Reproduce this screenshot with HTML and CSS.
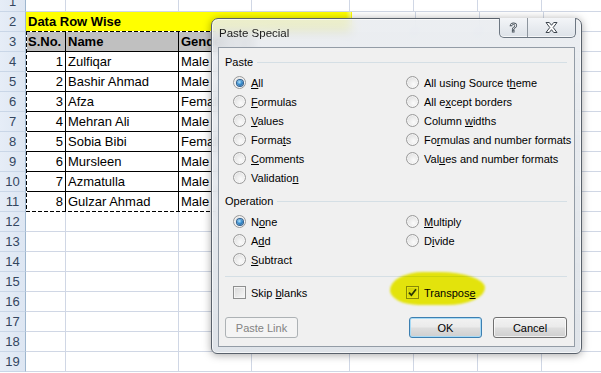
FILE: index.html
```html
<!DOCTYPE html>
<html>
<head>
<meta charset="utf-8">
<link rel="stylesheet" href="styles.css">
</head>
<body>
<div class="sheet">
  <div class="row"><div class="rh">1</div><div class="c ca"></div><div class="c cb"></div><div class="c cc"></div><div class="c cd"></div><div class="c ce"></div><div class="c ce"></div><div class="c ce"></div><div class="c ce"></div></div>
  <div class="row"><div class="rh">2</div><div class="c span4 title-cell">Data Row Wise</div><div class="c ce"></div><div class="c ce"></div><div class="c ce"></div><div class="c ce"></div></div>
  <div class="row"><div class="rh">3</div><div class="c ca t hd">S.No.</div><div class="c cb t hd">Name</div><div class="c cc t hd">Gender</div><div class="c cd"></div><div class="c ce"></div><div class="c ce"></div><div class="c ce"></div><div class="c ce"></div></div>
  <div class="row"><div class="rh">4</div><div class="c ca t num">1</div><div class="c cb t">Zulfiqar</div><div class="c cc t">Male</div><div class="c cd"></div><div class="c ce"></div><div class="c ce"></div><div class="c ce"></div><div class="c ce"></div></div>
  <div class="row"><div class="rh">5</div><div class="c ca t num">2</div><div class="c cb t">Bashir Ahmad</div><div class="c cc t">Male</div><div class="c cd"></div><div class="c ce"></div><div class="c ce"></div><div class="c ce"></div><div class="c ce"></div></div>
  <div class="row"><div class="rh">6</div><div class="c ca t num">3</div><div class="c cb t">Afza</div><div class="c cc t">Female</div><div class="c cd"></div><div class="c ce"></div><div class="c ce"></div><div class="c ce"></div><div class="c ce"></div></div>
  <div class="row"><div class="rh">7</div><div class="c ca t num">4</div><div class="c cb t">Mehran Ali</div><div class="c cc t">Male</div><div class="c cd"></div><div class="c ce"></div><div class="c ce"></div><div class="c ce"></div><div class="c ce"></div></div>
  <div class="row"><div class="rh">8</div><div class="c ca t num">5</div><div class="c cb t">Sobia Bibi</div><div class="c cc t">Female</div><div class="c cd"></div><div class="c ce"></div><div class="c ce"></div><div class="c ce"></div><div class="c ce"></div></div>
  <div class="row"><div class="rh">9</div><div class="c ca t num">6</div><div class="c cb t">Mursleen</div><div class="c cc t">Male</div><div class="c cd"></div><div class="c ce"></div><div class="c ce"></div><div class="c ce"></div><div class="c ce"></div></div>
  <div class="row"><div class="rh">10</div><div class="c ca t num">7</div><div class="c cb t">Azmatulla</div><div class="c cc t">Male</div><div class="c cd"></div><div class="c ce"></div><div class="c ce"></div><div class="c ce"></div><div class="c ce"></div></div>
  <div class="row"><div class="rh">11</div><div class="c ca t num">8</div><div class="c cb t">Gulzar Ahmad</div><div class="c cc t">Male</div><div class="c cd"></div><div class="c ce"></div><div class="c ce"></div><div class="c ce"></div><div class="c ce"></div></div>
  <div class="row"><div class="rh">12</div><div class="c ca"></div><div class="c cb"></div><div class="c cc"></div><div class="c cd"></div><div class="c ce"></div><div class="c ce"></div><div class="c ce"></div><div class="c ce"></div></div>
  <div class="row"><div class="rh">13</div><div class="c ca"></div><div class="c cb"></div><div class="c cc"></div><div class="c cd"></div><div class="c ce"></div><div class="c ce"></div><div class="c ce"></div><div class="c ce"></div></div>
  <div class="row"><div class="rh">14</div><div class="c ca"></div><div class="c cb"></div><div class="c cc"></div><div class="c cd"></div><div class="c ce"></div><div class="c ce"></div><div class="c ce"></div><div class="c ce"></div></div>
  <div class="row"><div class="rh">15</div><div class="c ca"></div><div class="c cb"></div><div class="c cc"></div><div class="c cd"></div><div class="c ce"></div><div class="c ce"></div><div class="c ce"></div><div class="c ce"></div></div>
  <div class="row"><div class="rh">16</div><div class="c ca"></div><div class="c cb"></div><div class="c cc"></div><div class="c cd"></div><div class="c ce"></div><div class="c ce"></div><div class="c ce"></div><div class="c ce"></div></div>
  <div class="row"><div class="rh">17</div><div class="c ca"></div><div class="c cb"></div><div class="c cc"></div><div class="c cd"></div><div class="c ce"></div><div class="c ce"></div><div class="c ce"></div><div class="c ce"></div></div>
  <div class="row"><div class="rh">18</div><div class="c ca"></div><div class="c cb"></div><div class="c cc"></div><div class="c cd"></div><div class="c ce"></div><div class="c ce"></div><div class="c ce"></div><div class="c ce"></div></div>
  <div class="row"><div class="rh">19</div><div class="c ca"></div><div class="c cb"></div><div class="c cc"></div><div class="c cd"></div><div class="c ce"></div><div class="c ce"></div><div class="c ce"></div><div class="c ce"></div></div>
</div>

<div class="ants"></div>

<div class="dialog">
  <div class="titlebar">
    <span class="title">Paste Special</span>
    <div class="caption">
      <span class="cbtn help">?</span>
      <span class="cbtn close"><svg width="13" height="11" viewBox="0 0 13 11"><path d="M1 0.5 H4.3 L6.5 3.3 L8.7 0.5 H12 L8.2 5.5 L12 10.5 H8.7 L6.5 7.7 L4.3 10.5 H1 L4.8 5.5 Z" fill="#fff" stroke="#3e464f" stroke-width="1" stroke-linejoin="round"/></svg></span>
    </div>
  </div>
  <div class="client">
    <div class="ghead">Paste</div>
    <div class="opts">
      <div class="opt"><span class="radio on"></span><span><u>A</u>ll</span></div>
      <div class="opt"><span class="radio"></span><span>All using Source t<u>h</u>eme</span></div>
      <div class="opt"><span class="radio"></span><span><u>F</u>ormulas</span></div>
      <div class="opt"><span class="radio"></span><span>All e<u>x</u>cept borders</span></div>
      <div class="opt"><span class="radio"></span><span><u>V</u>alues</span></div>
      <div class="opt"><span class="radio"></span><span>Column <u>w</u>idths</span></div>
      <div class="opt"><span class="radio"></span><span>Forma<u>t</u>s</span></div>
      <div class="opt"><span class="radio"></span><span>Fo<u>r</u>mulas and number formats</span></div>
      <div class="opt"><span class="radio"></span><span><u>C</u>omments</span></div>
      <div class="opt"><span class="radio"></span><span>Val<u>u</u>es and number formats</span></div>
      <div class="opt"><span class="radio"></span><span>Validatio<u>n</u></span></div>
      <div class="opt"></div>
    </div>
    <div class="ghead op">Operation</div>
    <div class="opts">
      <div class="opt"><span class="radio on"></span><span>N<u>o</u>ne</span></div>
      <div class="opt"><span class="radio"></span><span><u>M</u>ultiply</span></div>
      <div class="opt"><span class="radio"></span><span>A<u>d</u>d</span></div>
      <div class="opt"><span class="radio"></span><span>D<u>i</u>vide</span></div>
      <div class="opt"><span class="radio"></span><span><u>S</u>ubtract</span></div>
      <div class="opt"></div>
    </div>
    <div class="sep"></div>
    <div class="opts checks">
      <div class="opt"><span class="check"></span><span>Skip <u>b</u>lanks</span></div>
      <div class="opt"><span class="check on"><svg width="9" height="9" viewBox="0 0 9 9"><path d="M1 4.6 L3.4 7.2 L8 1.2" fill="none" stroke="#2b3a55" stroke-width="1.8"/></svg></span><span>Transpos<u>e</u></span></div>
    </div>
    <div class="buttons">
      <span class="btn dis">Paste Link</span>
      <span class="btn def">OK</span>
      <span class="btn">Cancel</span>
    </div>
    <div class="marker"></div>
  </div>
</div>
</body>
</html>
```

FILE: styles.css
```css
html, body {
  margin: 0;
  padding: 0;
}
body {
  width: 601px;
  height: 373px;
  overflow: hidden;
  background: #fff;
  position: relative;
  font-family: "Liberation Sans", Arial, sans-serif;
}

/* ---------- spreadsheet ---------- */
.sheet {
  margin-top: -8px;
  width: 606px;
}
.row {
  display: flex;
  height: 20px;
}
.rh {
  box-sizing: border-box;
  width: 26px;
  flex: none;
  height: 20px;
  background: linear-gradient(90deg, #e6edf7, #dde6f2);
  border-right: 1px solid #9eb6ce;
  border-bottom: 1px solid #c9d6e7;
  color: #34465f;
  font-size: 13px;
  line-height: 19px;
  text-align: center;
}
.c {
  box-sizing: border-box;
  flex: none;
  height: 20px;
  border-right: 1px solid #d0d7e5;
  border-bottom: 1px solid #d0d7e5;
  font-size: 13px;
  line-height: 19px;
  padding: 0 2px;
  color: #000;
  white-space: nowrap;
  overflow: hidden;
}
.ca { width: 40px; }
.cb { width: 113px; }
.cc { width: 73px; }
.cd { width: 98px; }
.ce { width: 64px; }
.span4 {
  width: 326px;
  background: linear-gradient(90deg, #ffff00 0, #ffff00 320px, rgba(255,255,0,0.4) 326px);
  border-right-color: transparent;
  border-bottom-color: #000;
}
.title-cell {
  font-weight: bold;
}
.t {
  border-right-color: #000;
  border-bottom-color: #000;
}
.hd {
  background: #c0c0c0;
  font-weight: bold;
}
.num {
  text-align: right;
}

.ants {
  position: absolute;
  left: 26px;
  top: 31px;
  width: 240px;
  height: 181px;
  background:
    repeating-linear-gradient(90deg, #000 0 4px, #fff 4px 6px) left top / 100% 1px no-repeat,
    repeating-linear-gradient(90deg, #000 0 4px, #fff 4px 6px) left bottom / 100% 1px no-repeat,
    repeating-linear-gradient(180deg, #000 0 4px, #fff 4px 6px) left top / 1px 100% no-repeat;
}

/* ---------- dialog ---------- */
.dialog {
  position: absolute;
  left: 211px;
  top: 18px;
  width: 371px;
  height: 336px;
  box-sizing: border-box;
  border: 1px solid #59616b;
  border-radius: 7px 7px 6px 6px;
  padding: 0 6px 6px 6px;
  background: linear-gradient(180deg, rgba(232,235,239,0.85), rgba(220,225,231,0.9));
  backdrop-filter: blur(5px);
  box-shadow: inset 0 0 0 1px rgba(255,255,255,0.65), 0 1px 8px rgba(0,0,0,0.35);
  display: flex;
  flex-direction: column;
}
.titlebar {
  height: 28px;
  display: flex;
  align-items: flex-start;
  justify-content: space-between;
  flex: none;
}
.title {
  font-size: 11.5px;
  color: #1b1b1b;
  line-height: 28px;
  padding-left: 1px;
}
.caption {
  display: flex;
  margin-top: -1px;
  margin-right: -1px;
  height: 19px;
  border: 1px solid #6d7782;
  border-top: none;
  border-radius: 0 0 5px 5px;
  background: linear-gradient(180deg, #f3f5f8, #dde2e8);
  box-shadow: inset 0 -1px 0 rgba(255,255,255,0.7);
}
.cbtn {
  display: flex;
  align-items: center;
  justify-content: center;
  height: 19px;
}
.help {
  width: 27px;
  border-right: 1px solid #8d959e;
  font-size: 13px;
  font-weight: bold;
  color: #fff;
  -webkit-text-stroke: 0.8px #46505a;
}
.close {
  width: 47px;
}

.client {
  position: relative;
  flex: 1;
  background: #f0f0f0;
  border: 1px solid #939ca6;
  padding: 6px 7px 0 6px;
  font-size: 11px;
  color: #000;
}
.ghead {
  display: flex;
  align-items: center;
  height: 16px;
  gap: 4px;
}
.ghead::after {
  content: "";
  flex: 1;
  border-top: 1px solid #d5dfe5;
}
.ghead.op {
  margin-top: 6px;
}
.opts {
  display: grid;
  grid-template-columns: 173px 1fr;
  grid-auto-rows: 19px;
  padding-left: 8px;
  margin-top: 3px;
}
.opt {
  display: flex;
  align-items: center;
  gap: 5px;
  white-space: nowrap;
}
.radio {
  box-sizing: border-box;
  width: 13px;
  height: 13px;
  border-radius: 50%;
  border: 1px solid #9a9a9a;
  background: radial-gradient(circle at 60% 65%, #fbfbfb 0%, #e8e8e8 55%, #cfcfcf 100%);
  box-shadow: inset 0 0 0 1px rgba(255,255,255,0.6);
  flex: none;
  display: flex;
  align-items: center;
  justify-content: center;
}
.radio.on::after {
  content: "";
  width: 6px;
  height: 6px;
  border-radius: 50%;
  background: radial-gradient(circle at 40% 35%, #b6e4fb 0%, #3a8fd0 45%, #1a4f85 100%);
  box-shadow: 0 0 0 1px #2f5f8f;
}
.sep {
  margin-top: 7px;
  height: 0;
  border-top: 1px solid #d5dfe5;
}
.checks {
  margin-top: 6px;
}
.check {
  box-sizing: border-box;
  width: 13px;
  height: 13px;
  border: 1px solid #8e8f8f;
  background: linear-gradient(135deg, #d8d8d8, #f7f7f7);
  box-shadow: inset 0 0 0 1px #f4f4f4;
  flex: none;
  display: flex;
  align-items: center;
  justify-content: center;
}
.buttons {
  display: flex;
  gap: 11px;
  margin-top: 15px;
}
.btn {
  box-sizing: border-box;
  width: 73px;
  height: 21px;
  display: flex;
  align-items: center;
  justify-content: center;
  border: 1px solid #707070;
  border-radius: 3px;
  background: linear-gradient(180deg, #f2f2f2 0%, #ebebeb 45%, #dddddd 55%, #cfcfcf 100%);
  box-shadow: inset 0 0 0 1px rgba(255,255,255,0.7);
}
.btn.dis {
  margin-right: auto;
  border-color: #adb2b5;
  background: #f4f4f4;
  color: #838383;
  box-shadow: none;
}
.btn.def {
  border-color: #3c7fb1;
  box-shadow: inset 0 0 0 1px #a8daf5;
}
.btn:last-child {
  width: 74px;
}
.marker {
  position: absolute;
  left: 171px;
  top: 224px;
  width: 95px;
  height: 33px;
  background: #f2f20c;
  border-radius: 35% 48% 40% 30% / 55% 48% 52% 45%;
  filter: blur(1px);
  mix-blend-mode: multiply;
}
```
